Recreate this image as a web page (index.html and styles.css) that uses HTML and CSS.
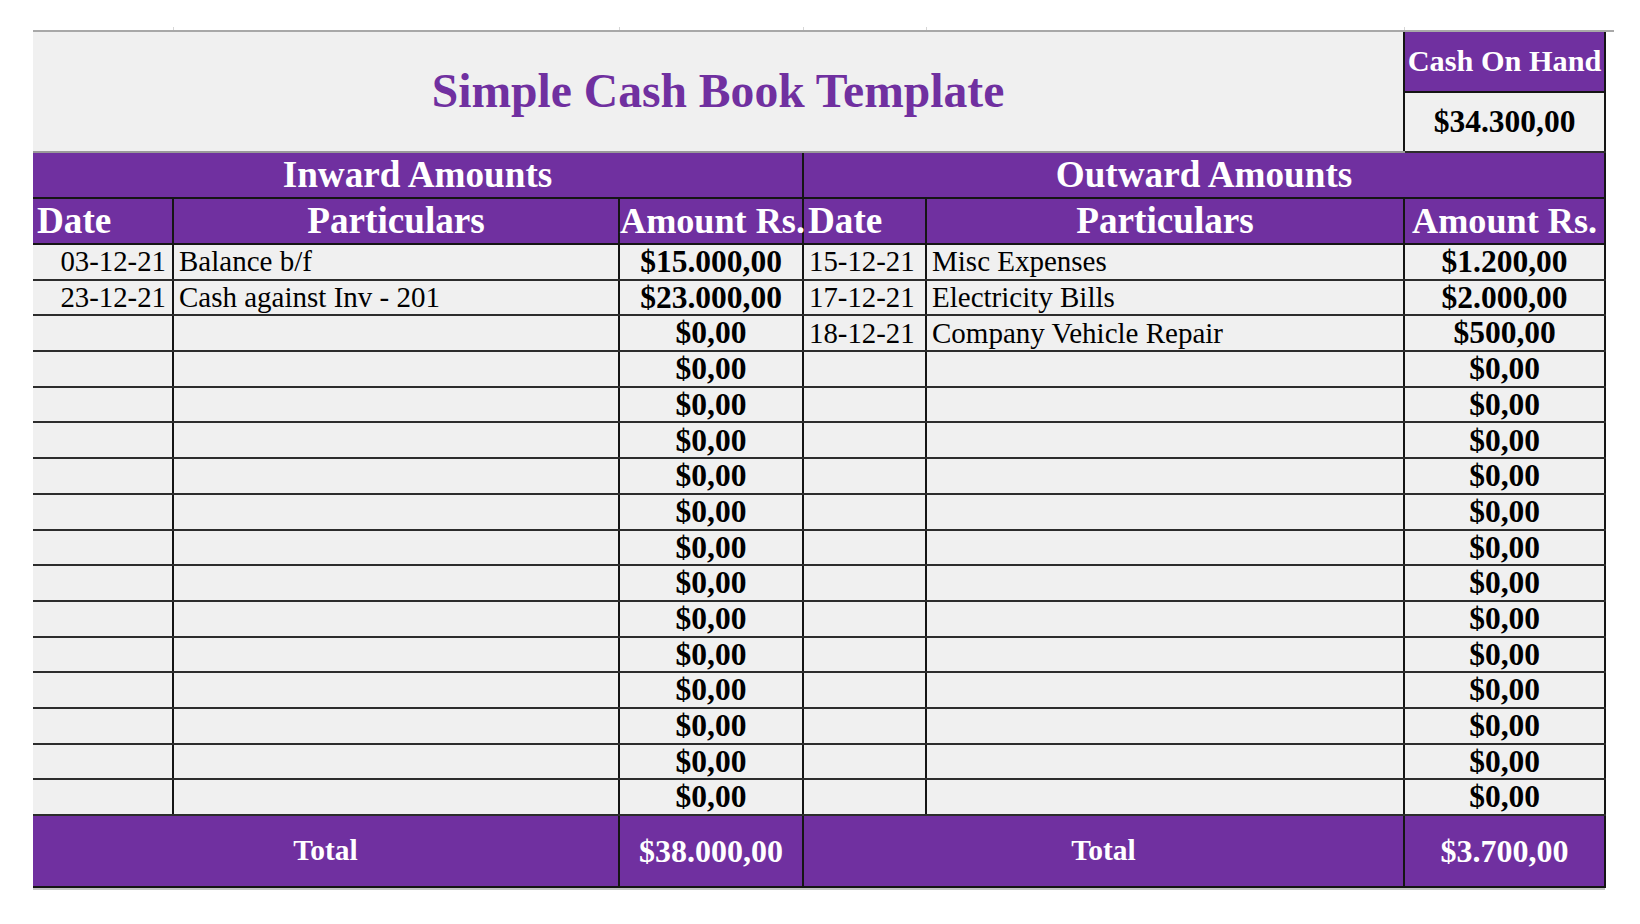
FILE: index.html
```html
<!DOCTYPE html>
<html lang="en">
<head>
<meta charset="utf-8">
<title>Simple Cash Book Template</title>
<link rel="stylesheet" href="styles.css">
</head>
<body>
<div class="sheet">
  <div class="ticks">
    <span class="tick t1"></span><span class="tick t2"></span><span class="tick t3"></span><span class="tick t4"></span><span class="tick t5"></span><span class="tick t6"></span>
  </div>
  <div class="topline"></div>
  <table class="book">
    <colgroup>
      <col class="c-date"><col class="c-part"><col class="c-amt"><col class="c-date2"><col class="c-part2"><col class="c-amt2">
    </colgroup>
    <tbody>
      <tr class="r-title">
        <td class="title" colspan="5" rowspan="2">Simple Cash Book Template</td>
        <td class="coh-head">Cash On Hand</td>
      </tr>
      <tr class="r-title">
        <td class="coh-val">$34.300,00</td>
      </tr>
      <tr class="r-section">
        <th class="section" colspan="3">Inward Amounts</th>
        <th class="section last" colspan="3">Outward Amounts</th>
      </tr>
      <tr class="r-head">
        <th class="h-left">Date</th>
        <th>Particulars</th>
        <th class="h-amt">Amount Rs.</th>
        <th class="h-left">Date</th>
        <th>Particulars</th>
        <th class="h-amt last">Amount Rs.</th>
      </tr>
      <tr class="r-data"><td class="d-in">03-12-21</td><td class="p">Balance b/f</td><td class="a">$15.000,00</td><td class="d-out">15-12-21</td><td class="p">Misc Expenses</td><td class="a last">$1.200,00</td></tr>
      <tr class="r-data"><td class="d-in">23-12-21</td><td class="p">Cash against Inv - 201</td><td class="a">$23.000,00</td><td class="d-out">17-12-21</td><td class="p">Electricity Bills</td><td class="a last">$2.000,00</td></tr>
      <tr class="r-data"><td class="d-in"></td><td class="p"></td><td class="a">$0,00</td><td class="d-out">18-12-21</td><td class="p">Company Vehicle Repair</td><td class="a last">$500,00</td></tr>
      <tr class="r-data"><td class="d-in"></td><td class="p"></td><td class="a">$0,00</td><td class="d-out"></td><td class="p"></td><td class="a last">$0,00</td></tr>
      <tr class="r-data"><td class="d-in"></td><td class="p"></td><td class="a">$0,00</td><td class="d-out"></td><td class="p"></td><td class="a last">$0,00</td></tr>
      <tr class="r-data"><td class="d-in"></td><td class="p"></td><td class="a">$0,00</td><td class="d-out"></td><td class="p"></td><td class="a last">$0,00</td></tr>
      <tr class="r-data"><td class="d-in"></td><td class="p"></td><td class="a">$0,00</td><td class="d-out"></td><td class="p"></td><td class="a last">$0,00</td></tr>
      <tr class="r-data"><td class="d-in"></td><td class="p"></td><td class="a">$0,00</td><td class="d-out"></td><td class="p"></td><td class="a last">$0,00</td></tr>
      <tr class="r-data"><td class="d-in"></td><td class="p"></td><td class="a">$0,00</td><td class="d-out"></td><td class="p"></td><td class="a last">$0,00</td></tr>
      <tr class="r-data"><td class="d-in"></td><td class="p"></td><td class="a">$0,00</td><td class="d-out"></td><td class="p"></td><td class="a last">$0,00</td></tr>
      <tr class="r-data"><td class="d-in"></td><td class="p"></td><td class="a">$0,00</td><td class="d-out"></td><td class="p"></td><td class="a last">$0,00</td></tr>
      <tr class="r-data"><td class="d-in"></td><td class="p"></td><td class="a">$0,00</td><td class="d-out"></td><td class="p"></td><td class="a last">$0,00</td></tr>
      <tr class="r-data"><td class="d-in"></td><td class="p"></td><td class="a">$0,00</td><td class="d-out"></td><td class="p"></td><td class="a last">$0,00</td></tr>
      <tr class="r-data"><td class="d-in"></td><td class="p"></td><td class="a">$0,00</td><td class="d-out"></td><td class="p"></td><td class="a last">$0,00</td></tr>
      <tr class="r-data"><td class="d-in"></td><td class="p"></td><td class="a">$0,00</td><td class="d-out"></td><td class="p"></td><td class="a last">$0,00</td></tr>
      <tr class="r-data"><td class="d-in"></td><td class="p"></td><td class="a">$0,00</td><td class="d-out"></td><td class="p"></td><td class="a last">$0,00</td></tr>
      <tr class="r-total">
        <td class="total" colspan="2">Total</td>
        <td class="total-amt">$38.000,00</td>
        <td class="total" colspan="2">Total</td>
        <td class="total-amt last">$3.700,00</td>
      </tr>
    </tbody>
  </table>
  <div class="bottomline"></div>
</div>
</body>
</html>
```
FILE: styles.css
```css
html, body {
  margin: 0;
  padding: 0;
  background: #ffffff;
}

body {
  font-family: "Liberation Serif", "Times New Roman", serif;
  color: #000;
}

.sheet {
  padding: 27px 0 0 33px;
}

.ticks {
  display: flex;
  height: 3px;
  width: 1581px;
}

.tick {
  border-right: 1px solid #d6d6d6;
  box-sizing: border-box;
}
.t1 { width: 141px; }
.t2 { width: 446px; }
.t3 { width: 184px; }
.t4 { width: 123px; }
.t5 { width: 478px; }
.t6 { width: 0; border-right: none; }

.topline {
  width: 1581px;
  height: 2px;
  background: #a8a8a8;
}

.book {
  width: 1572px;
  table-layout: fixed;
  border-collapse: collapse;
  background: #f0f0f0;
}

.c-date { width: 140px; }
.c-part { width: 446px; }
.c-amt { width: 184px; }
.c-date2 { width: 123px; }
.c-part2 { width: 478px; }
.c-amt2 { width: 201px; }

.book td, .book th {
  padding: 0;
  white-space: nowrap;
  overflow: visible;
  border-right: 2px solid #151515;
  border-bottom: 2px solid #2c2c2c;
  line-height: 1;
}

.book tr.r-title { height: 60px; }
.book tr.r-section { height: 46px; }
.book tr.r-head { height: 46px; }
.book tr.r-data { height: 35.7px; }
.book tr.r-total { height: 72px; }

.book td.title {
  background: #f0f0f0;
  color: #7030a0;
  font-size: 47.6px;
  font-weight: bold;
  text-align: center;
  border-bottom: 2px solid #9a9a9a;
}

.book td.coh-head {
  background: #7030a0;
  color: #fff;
  font-size: 30.3px;
  font-weight: bold;
  text-align: center;
  border-left: 2px solid #151515;
  border-bottom: 2px solid #151515;
}

.book td.coh-val {
  background: #f0f0f0;
  font-size: 31.5px;
  font-weight: bold;
  text-align: center;
  border-left: 2px solid #151515;
}

.book th {
  background: #7030a0;
  color: #ffffff;
  font-weight: bold;
  font-size: 37.2px;
  text-align: center;
  border-bottom: 2px solid #151515;
}

.book th.h-left {
  text-align: left;
  padding-left: 4px;
}

.book th.h-amt {
  text-align: center;
  font-size: 36.2px;
}

.book td.d-in {
  font-size: 28.8px;
  text-align: right;
  padding-right: 6px;
}

.book td.d-out {
  font-size: 28.8px;
  text-align: left;
  padding-left: 5px;
}

.book td.p {
  font-size: 29px;
  text-align: left;
  padding-left: 5px;
}

.book td.a {
  font-size: 31.5px;
  font-weight: bold;
  text-align: center;
}

.book td.total, .book td.total-amt {
  background: #7030a0;
  color: #ffffff;
  font-weight: bold;
  text-align: center;
  border-bottom: 2px solid #151515;
}

.book td.total { font-size: 29.5px; }
.book td.total-amt { font-size: 32px; }

.bottomline {
  width: 1572px;
  height: 2px;
  background: #c4c4c4;
}
```
